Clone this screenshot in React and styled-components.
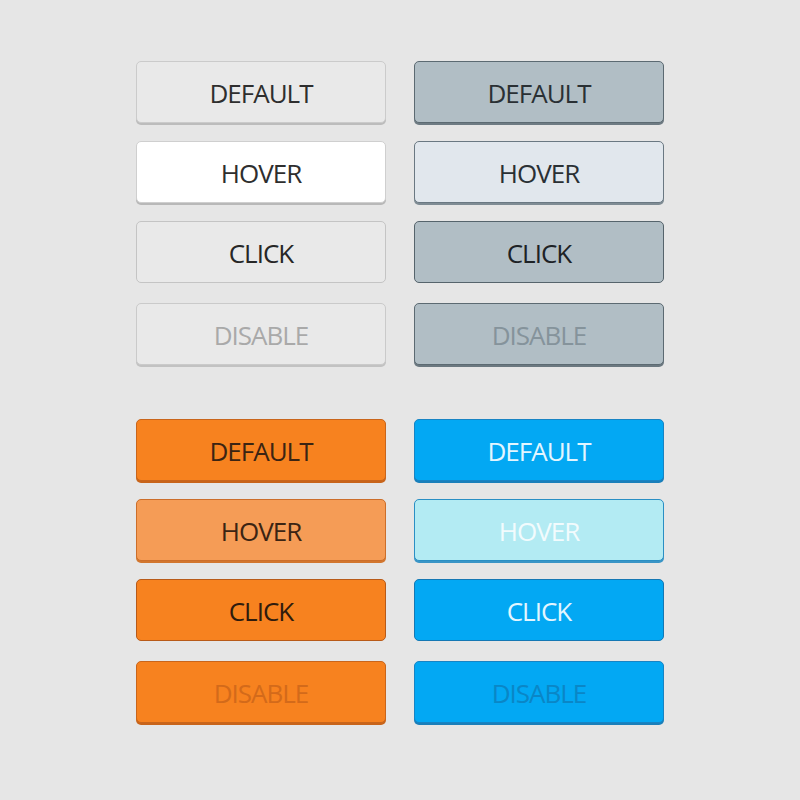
import React from "react";
import styled, { createGlobalStyle, css } from "styled-components";

const GlobalStyle = createGlobalStyle`
  html, body {
    margin: 0;
    padding: 0;
    background: #e6e6e6;
  }
`;

const Page = styled.div`
  width: 800px;
  height: 800px;
  box-sizing: border-box;
  padding: 61px 0 0 136px;
  display: flex;
  flex-direction: column;
  gap: 54px;
  font-family: "Open Sans", "Noto Sans", sans-serif;
`;

const Group = styled.div`
  display: grid;
  grid-template-columns: 250px 250px;
  column-gap: 28px;
`;

const Column = styled.div`
  display: flex;
  flex-direction: column;
  gap: 18px;
`;

// palette per colour theme, one entry per button state
const themes = {
  light: {
    default: { bg: "#e9e9e9", border: "#cbcbcb", text: "#2e2e2e", shadow: "#bcbcbc" },
    hover: { bg: "#ffffff", border: "#cfcfcf", text: "#2e2e2e", shadow: "#b8b8b8" },
    click: { bg: "#e9e9e9", border: "#c4c4c4", text: "#262626", shadow: null },
    disable: { bg: "#e9e9e9", border: "#cacaca", text: "#a9a9a9", shadow: "#c2c2c2" },
  },
  slate: {
    default: { bg: "#b1bec5", border: "#5c6a72", text: "#2a3034", shadow: "#6e7b83" },
    hover: { bg: "#e1e7ed", border: "#6a7882", text: "#2a3034", shadow: "#7f8c94" },
    click: { bg: "#b1bec5", border: "#56646c", text: "#1d2226", shadow: null },
    disable: { bg: "#b1bec5", border: "#5c6a72", text: "#85939b", shadow: "#6b7880" },
  },
  orange: {
    default: { bg: "#f7821f", border: "#c9651b", text: "#3b2413", shadow: "#c8641a" },
    hover: { bg: "#f59c56", border: "#cc6e2a", text: "#3b2413", shadow: "#d2762e" },
    click: { bg: "#f7821f", border: "#b85a18", text: "#2f1b0d", shadow: null },
    disable: { bg: "#f7821f", border: "#c9651b", text: "#d36a1a", shadow: "#c8641a" },
  },
  blue: {
    default: { bg: "#03a8f3", border: "#1784c4", text: "#e3f6ff", shadow: "#1a7fba" },
    hover: { bg: "#b3ebf3", border: "#2a8fc4", text: "#f2fbfd", shadow: "#3a95c6" },
    click: { bg: "#03a8f3", border: "#1478b4", text: "#e3f6ff", shadow: null },
    disable: { bg: "#03a8f3", border: "#1784c4", text: "#0a86c6", shadow: "#1a7fba" },
  },
};

const StateButton = styled.button`
  height: 62px;
  width: 100%;
  box-sizing: border-box;
  border-radius: 5px;
  font-family: inherit;
  font-size: 26px;
  letter-spacing: -1px;
  padding: 2px 0 0;
  cursor: pointer;
  ${({ $c }) => css`
    background: ${$c.bg};
    color: ${$c.text};
    border: 1px solid ${$c.border};
    box-shadow: ${$c.shadow ? `0 2px 0 ${$c.shadow}` : "none"};
  `}
  &:disabled {
    cursor: default;
    margin-top: 2px;
  }
`;

const states = [
  { key: "default", label: "DEFAULT" },
  { key: "hover", label: "HOVER" },
  { key: "click", label: "CLICK" },
  { key: "disable", label: "DISABLE" },
];

function ButtonSet({ theme }) {
  return (
    <Column>
      {states.map((s) => (
        <StateButton
          key={s.key}
          $c={themes[theme][s.key]}
          disabled={s.key === "disable"}
        >
          {s.label}
        </StateButton>
      ))}
    </Column>
  );
}

export default function App() {
  return (
    <>
      <GlobalStyle />
      <Page>
        <Group>
          <ButtonSet theme="light" />
          <ButtonSet theme="slate" />
        </Group>
        <Group>
          <ButtonSet theme="orange" />
          <ButtonSet theme="blue" />
        </Group>
      </Page>
    </>
  );
}
